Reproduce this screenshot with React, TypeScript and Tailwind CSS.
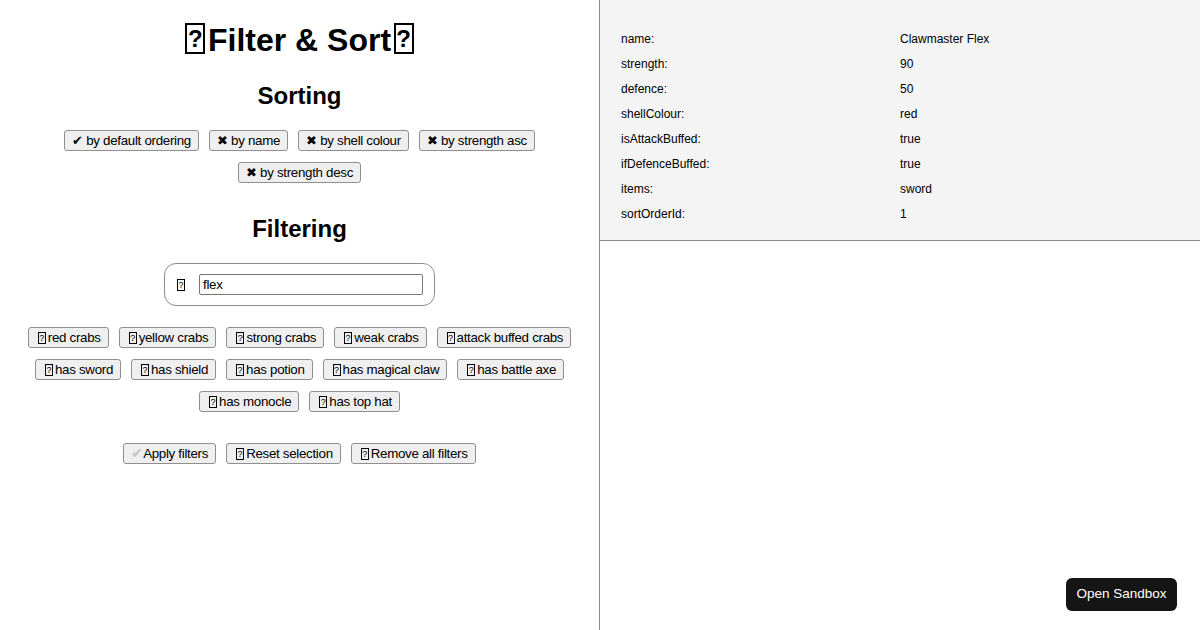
import { useState } from "react";

const sortOptions = [
  { label: "by default ordering", active: true },
  { label: "by name", active: false },
  { label: "by shell colour", active: false },
  { label: "by strength asc", active: false },
  { label: "by strength desc", active: false },
];

// emoji in the original render as missing-glyph boxes, so we draw the box
const filterOptions = [
  { emoji: "🔴", label: "red crabs" },
  { emoji: "🟡", label: "yellow crabs" },
  { emoji: "💪", label: "strong crabs" },
  { emoji: "🥺", label: "weak crabs" },
  { emoji: "🗯", label: "attack buffed crabs" },
  { emoji: "🗡", label: "has sword" },
  { emoji: "🛡", label: "has shield" },
  { emoji: "🧪", label: "has potion" },
  { emoji: "🦞", label: "has magical claw" },
  { emoji: "🪓", label: "has battle axe" },
  { emoji: "🧐", label: "has monocle" },
  { emoji: "🎩", label: "has top hat" },
];

const crab: [string, string][] = [
  ["name", "Clawmaster Flex"],
  ["strength", "90"],
  ["defence", "50"],
  ["shellColour", "red"],
  ["isAttackBuffed", "true"],
  ["ifDefenceBuffed", "true"],
  ["items", "sword"],
  ["sortOrderId", "1"],
];

function Tofu({ emoji, big }: { emoji: string; big?: boolean }) {
  return (
    <span
      title={emoji}
      className={
        big
          ? "mx-[2.5px] inline-block h-[31px] w-[20px] overflow-hidden border-2 border-black text-center align-[-3px] text-[24px] leading-[27px] font-bold"
          : "mx-[2px] inline-block h-[12px] w-[8px] overflow-hidden border border-black text-center align-[-2px] text-[9px] leading-[10px] tracking-normal"
      }
    >
      ?
    </span>
  );
}

function NativeButton({ children }: { children: React.ReactNode }) {
  return (
    <button className="h-[21px] rounded-[3px] border border-[#8f8f8f] bg-[#efefef] px-[7px] text-[13.33px] leading-none tracking-[-0.3px] text-black">
      {children}
    </button>
  );
}

export default function App() {
  const [query, setQuery] = useState("flex");

  return (
    <div className="relative flex h-[630px] w-[1200px] overflow-hidden bg-white font-['Liberation_Sans',Arial,sans-serif] text-black">
      {/* Filter & sort controls */}
      <div className="flex w-[600px] shrink-0 flex-col items-center border-r border-[#8c8c8c] px-3">
        <h1 className="mt-[22px] text-[32px] leading-[37px] font-bold">
          <Tofu emoji="🦀" big />
          Filter &amp; Sort
          <Tofu emoji="🦀" big />
        </h1>

        <h2 className="mt-[23px] text-[24px] leading-[28px] font-bold">Sorting</h2>
        <div className="mt-[20px] flex flex-wrap justify-center gap-x-[10px] gap-y-[11px]">
          {sortOptions.map((o) => (
            <NativeButton key={o.label}>
              <span className="text-[12.5px]">{o.active ? "✔" : "✖"}</span> {o.label}
            </NativeButton>
          ))}
        </div>

        <h2 className="mt-[32px] text-[24px] leading-[28px] font-bold">Filtering</h2>
        <div className="mt-[20px] flex h-[43px] w-[271px] items-center gap-[12px] rounded-[12px] border border-[#8c8c8c] pr-[11px] pl-[10px]">
          <Tofu emoji="🔍" />
          <input
            value={query}
            onChange={(e) => setQuery(e.target.value)}
            className="h-[21px] flex-1 rounded-[2px] border border-[#767676] px-[3px] text-[13.33px] tracking-[-0.3px] outline-none"
          />
        </div>

        <div className="mt-[21px] flex flex-wrap justify-center gap-x-[10px] gap-y-[11px]">
          {filterOptions.map((f) => (
            <NativeButton key={f.label}>
              <Tofu emoji={f.emoji} />
              {f.label}
            </NativeButton>
          ))}
        </div>

        <div className="mt-[31px] flex justify-center gap-[10px]">
          <NativeButton>
            <span className="text-[14px] text-[#c4c4c4]">✔︎</span>Apply filters
          </NativeButton>
          <NativeButton>
            <Tofu emoji="🔄" />
            Reset selection
          </NativeButton>
          <NativeButton>
            <Tofu emoji="🗑" />
            Remove all filters
          </NativeButton>
        </div>
      </div>

      {/* Selected crab */}
      <div className="flex-1">
        <div className="h-[241px] border-b border-[#8c8c8c] bg-[#f4f4f4] px-[21px] pt-[26px]">
          <table className="w-full border-collapse text-[12px]">
            <tbody>
              {crab.map(([k, v]) => (
                <tr key={k} className="h-[25px]">
                  <td className="w-1/2 p-0 align-middle">{k}:</td>
                  <td className="w-1/2 p-0 align-middle">{v}</td>
                </tr>
              ))}
            </tbody>
          </table>
        </div>
      </div>

      <button className="absolute right-[23px] bottom-[19px] h-[33px] w-[111px] rounded-[6px] bg-[#151515] text-[13.5px] text-white">
        Open Sandbox
      </button>
    </div>
  );
}
